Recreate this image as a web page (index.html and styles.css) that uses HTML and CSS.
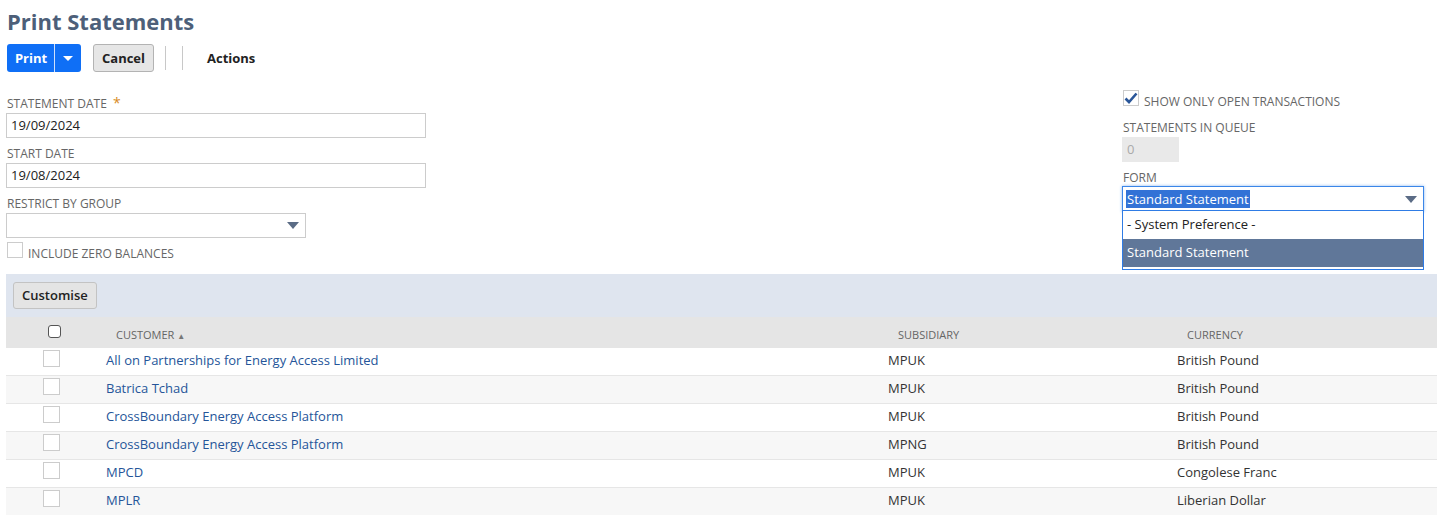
FILE: index.html
```html
<!DOCTYPE html>
<html lang="en">
<head>
	<meta charset="UTF-8">
	<title>Print Statements</title>
	<link rel="stylesheet" href="styles.css">
</head>
<body>
	<h1 class="page-title">Print Statements</h1>

	<div class="toolbar">
		<div class="btn-split">
			<span class="btn-split__main">Print</span>
			<span class="btn-split__arrow"><span class="caret caret--white"></span></span>
		</div>
		<span class="btn-grey">Cancel</span>
		<span class="toolbar__sep"></span>
		<span class="toolbar__sep"></span>
		<span class="toolbar__actions">Actions</span>
	</div>

	<div class="form">
		<div class="form__col form__col--left">
			<label class="field-label">Statement Date <span class="req">*</span></label>
			<div class="input">19/09/2024</div>

			<label class="field-label">Start Date</label>
			<div class="input">19/08/2024</div>

			<label class="field-label">Restrict By Group</label>
			<div class="input input--select input--short"><span class="caret"></span></div>

			<div class="check-row">
				<span class="box"></span>
				<span class="check-row__text">Include Zero Balances</span>
			</div>
		</div>

		<div class="form__col form__col--right">
			<div class="check-row check-row--top">
				<span class="box box--checked">
					<svg width="14" height="12" viewBox="0 0 14 12"><path d="M1.5 6.5 L5 10 L12.5 1.5" fill="none" stroke="#2a5699" stroke-width="2.6"/></svg>
				</span>
				<span class="check-row__text">Show Only Open Transactions</span>
			</div>

			<label class="field-label">Statements In Queue</label>
			<div class="input input--disabled">0</div>

			<label class="field-label">Form</label>
			<div class="select-open">
				<div class="input input--select input--focus">
					<span class="selected-text">Standard Statement</span>
					<span class="caret"></span>
				</div>
				<ul class="dropdown">
					<li>- System Preference -</li>
					<li class="is-active">Standard Statement</li>
				</ul>
			</div>
		</div>
	</div>

	<div class="band">
		<span class="btn-grey btn-grey--normal">Customise</span>
	</div>

	<div class="grid">
		<div class="grid__row grid__row--head">
			<div class="grid__cell grid__cell--check"><span class="head-box"></span></div>
			<div class="grid__cell">Customer <span class="sort">&#9650;</span></div>
			<div class="grid__cell">Subsidiary</div>
			<div class="grid__cell">Currency</div>
		</div>
		<div class="grid__row">
			<div class="grid__cell grid__cell--check"><span class="row-box"></span></div>
			<div class="grid__cell"><a href="#">All on Partnerships for Energy Access Limited</a></div>
			<div class="grid__cell">MPUK</div>
			<div class="grid__cell">British Pound</div>
		</div>
		<div class="grid__row grid__row--alt">
			<div class="grid__cell grid__cell--check"><span class="row-box"></span></div>
			<div class="grid__cell"><a href="#">Batrica Tchad</a></div>
			<div class="grid__cell">MPUK</div>
			<div class="grid__cell">British Pound</div>
		</div>
		<div class="grid__row">
			<div class="grid__cell grid__cell--check"><span class="row-box"></span></div>
			<div class="grid__cell"><a href="#">CrossBoundary Energy Access Platform</a></div>
			<div class="grid__cell">MPUK</div>
			<div class="grid__cell">British Pound</div>
		</div>
		<div class="grid__row grid__row--alt">
			<div class="grid__cell grid__cell--check"><span class="row-box"></span></div>
			<div class="grid__cell"><a href="#">CrossBoundary Energy Access Platform</a></div>
			<div class="grid__cell">MPNG</div>
			<div class="grid__cell">British Pound</div>
		</div>
		<div class="grid__row">
			<div class="grid__cell grid__cell--check"><span class="row-box"></span></div>
			<div class="grid__cell"><a href="#">MPCD</a></div>
			<div class="grid__cell">MPUK</div>
			<div class="grid__cell">Congolese Franc</div>
		</div>
		<div class="grid__row grid__row--alt">
			<div class="grid__cell grid__cell--check"><span class="row-box"></span></div>
			<div class="grid__cell"><a href="#">MPLR</a></div>
			<div class="grid__cell">MPUK</div>
			<div class="grid__cell">Liberian Dollar</div>
		</div>
	</div>
</body>
</html>
```

FILE: styles.css
```css
*,
*::before,
*::after {
	box-sizing: border-box;
	padding: 0;
	margin: 0;
}
body {
	font-family: "Open Sans", "Liberation Sans", sans-serif;
	font-size: 13px;
	color: #333;
	background: #fff;
	overflow: hidden;
}

.page-title {
	font-size: 22px;
	font-weight: 700;
	color: #4d5f79;
	line-height: 30px;
	padding: 6px 0 0 7px;
}

/* toolbar */
.toolbar {
	display: flex;
	align-items: center;
	height: 28px;
	margin: 8px 0 0 7px;
}
.btn-split {
	display: flex;
	height: 28px;
	background: #0f6ff6;
	border-radius: 3px;
	color: #fff;
	font-weight: 700;
}
.btn-split__main {
	width: 48px;
	line-height: 28px;
	text-align: center;
	padding-left: 1px;
	border-right: 1px solid #cfe0fb;
}
.btn-split__arrow {
	width: 26px;
	display: flex;
	align-items: center;
	justify-content: center;
}
.btn-grey {
	display: inline-block;
	height: 28px;
	line-height: 26px;
	padding: 0 8px;
	margin-left: 12px;
	background: #e6e6e6;
	border: 1px solid #b3b3b3;
	border-radius: 3px;
	font-weight: 700;
	color: #222;
}
.toolbar__sep {
	width: 1px;
	height: 24px;
	background: #c8c8c8;
	margin-left: 11px;
}
.toolbar__sep + .toolbar__sep {
	margin-left: 16px;
}
.toolbar__actions {
	font-weight: 700;
	color: #222;
	margin-left: 24px;
}

.caret {
	display: inline-block;
	width: 0;
	height: 0;
	border-left: 6px solid transparent;
	border-right: 6px solid transparent;
	border-top: 7px solid #5b6c86;
}
.caret--white {
	border-left-width: 5px;
	border-right-width: 5px;
	border-top: 5px solid #fff;
}

/* form */
.form {
	display: flex;
	justify-content: space-between;
	padding: 23px 13px 0 6px;
	height: 202px;
}
.form__col--left {
	width: 420px;
}
.form__col--right {
	width: 302px;
}
.field-label {
	display: block;
	font-size: 12px;
	line-height: 16px;
	color: #666;
	text-transform: uppercase;
	padding-left: 1px;
	margin-bottom: 1px;
}
.req {
	color: #d88b1e;
	font-size: 14px;
	margin-left: 3px;
}
.input {
	height: 25px;
	border: 1px solid #ccc;
	line-height: 23px;
	padding: 0 4px;
	color: #222;
	margin-bottom: 8px;
}
.input--short {
	width: 300px;
}
.input--select {
	display: flex;
	align-items: center;
	padding-right: 6px;
}
.input--select .caret {
	margin-left: auto;
}
.input--disabled {
	width: 57px;
	background: #e9e9e9;
	border-color: #e9e9e9;
	color: #aaa;
}
.input--focus {
	height: 26px;
	border-color: #3b86e8;
	box-shadow: 0 0 3px #8db8f0;
	margin-top: -1px;
	margin-bottom: 0;
	padding-left: 3px;
}
.selected-text {
	background: #3272d6;
	color: #fff;
	line-height: 18px;
	padding: 0 1px;
}

.check-row {
	display: flex;
	align-items: flex-start;
	margin-top: -4px;
	padding-left: 1px;
}
.check-row--top {
	margin-top: -5px;
	margin-bottom: 10px;
}
.check-row__text {
	font-size: 12px;
	color: #666;
	text-transform: uppercase;
	margin-left: 5px;
	padding-top: 3px;
}
.box {
	width: 16px;
	height: 16px;
	border: 1px solid #ccc;
	background: #fff;
	display: flex;
	align-items: center;
	justify-content: center;
}
.box--checked svg {
	margin-top: -1px;
}

.select-open {
	position: relative;
}
.dropdown {
	position: absolute;
	left: 0;
	top: 24px;
	width: 302px;
	list-style: none;
	background: #fff;
	border: 1px solid #2f7ce5;
	padding-bottom: 2px;
	z-index: 2;
}
.dropdown li {
	height: 28px;
	line-height: 27px;
	padding-left: 4px;
	color: #222;
}
.dropdown li.is-active {
	background: #607799;
	color: #fff;
}

/* list band */
.band {
	margin-left: 6px;
	height: 43px;
	background: #dfe5ef;
	padding: 8px 0 0 7px;
}
.btn-grey--normal {
	margin-left: 0;
	height: 27px;
	line-height: 25px;
	font-weight: 600;
	color: #222;
	border-color: #c3c3c3;
	background: #e4e4e4;
}

/* grid */
.grid {
	margin-left: 6px;
}
.grid__row {
	display: grid;
	grid-template-columns: 90px 782px 289px 1fr;
	height: 28px;
	align-items: center;
	border-bottom: 1px solid #e6e6e6;
	background: #fff;
}
.grid__row--alt {
	background: #f7f7f7;
}
.grid__row--head {
	height: 31px;
	background: #e5e5e5;
	border-bottom: none;
	font-size: 11px;
	color: #666;
	text-transform: uppercase;
}
.grid__cell {
	padding-left: 10px;
	padding-bottom: 4px;
	white-space: nowrap;
}
.grid__row--head .grid__cell {
	padding-left: 20px;
	padding-bottom: 0;
	padding-top: 3px;
}
.grid__cell--check {
	padding-left: 0;
	padding-bottom: 0;
	display: flex;
	justify-content: center;
}
.grid__row--head .grid__cell--check {
	padding-left: 6px;
	padding-top: 0;
	margin-top: 0;
}
.sort {
	font-size: 8px;
	color: #777;
}
.head-box {
	width: 13px;
	height: 13px;
	border: 1px solid #555;
	border-radius: 3px;
	background: #fff;
	margin-top: -3px;
}
.row-box {
	width: 17px;
	height: 17px;
	border: 1px solid #ccc;
	background: #fff;
	margin-top: -6px;
}
.grid__cell a {
	color: #255599;
	text-decoration: none;
}
```
